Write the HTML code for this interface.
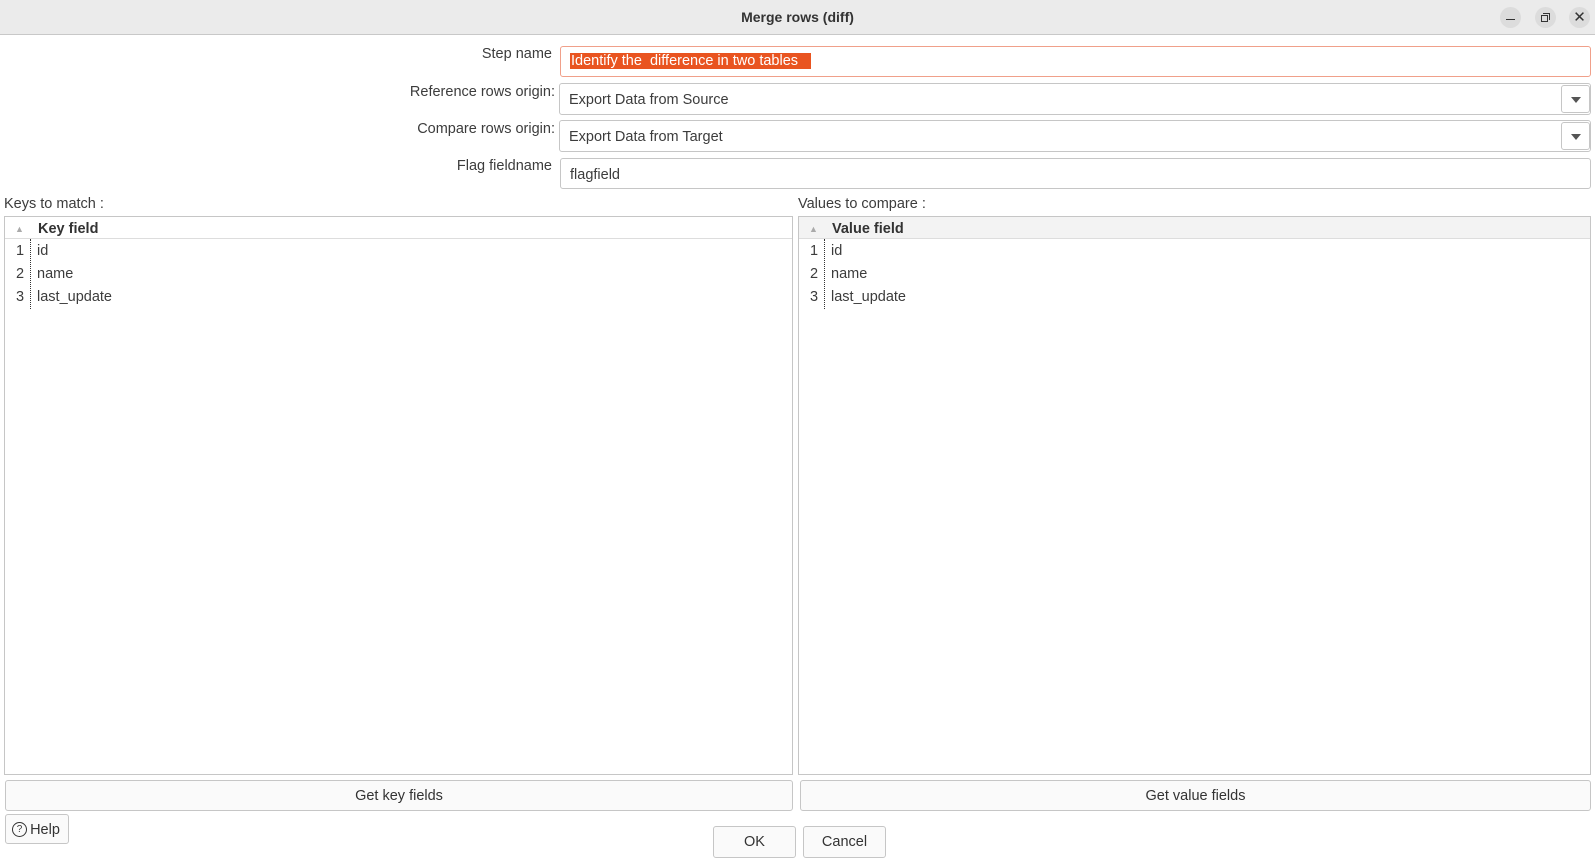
<!DOCTYPE html>
<html><head><meta charset="utf-8"><style>
*{box-sizing:border-box;margin:0;padding:0}
body{width:1595px;height:850px;overflow:hidden;background:#fff;font-family:"Liberation Sans","DejaVu Sans",sans-serif;font-size:14.5px;color:#3c3c3c;position:relative}
.a{position:absolute}
.title{left:0;top:0;width:1595px;height:35px;background:#ebebeb;border-bottom:1px solid #c8c8c8;text-align:center;line-height:35px;font-weight:bold;font-size:14px;color:#333}
.wb{width:21px;height:21px;border-radius:50%;background:#dcdcdc;top:7px}
.lbl{text-align:right;width:300px}
.inp{border:1px solid #c6c6c6;border-radius:3px;background:#fff;padding-left:9px;line-height:32px}
.dd{width:29px;height:28px;border:1px solid #c6c6c6;border-radius:3px;background:#fff}
.dd:after{content:"";position:absolute;left:9px;top:11px;border-left:5px solid transparent;border-right:5px solid transparent;border-top:6px solid #555}
.tbl{border:1px solid #c6c6c6;background:#fff}
.hdr{left:0;top:0;right:0;height:22px;border-bottom:1px solid #ddd;font-weight:bold;line-height:24px;color:#333}
.row{height:23px;line-height:25px;left:0;right:0}
.btn{border:1px solid #c6c6c6;border-radius:3px;background:#fafafa;text-align:center;line-height:31px;color:#333}
</style></head><body>
<div class="a title">Merge rows (diff)</div>
<div class="a wb" style="left:1500px"><div class="a" style="left:6px;top:12px;width:9px;height:1px;background:#333"></div></div>
<div class="a wb" style="left:1535px"><div class="a" style="left:6px;top:8px;width:7px;height:7px;border:1px solid #333"></div><div class="a" style="left:8px;top:6px;width:7px;height:7px;border-top:1px solid #333;border-right:1px solid #333"></div></div>
<div class="a wb" style="left:1569px;font-size:15px;line-height:21px;text-align:center;color:#333">✕</div>

<div class="a lbl" style="left:252px;top:46px">Step name</div>
<div class="a lbl" style="left:255px;top:84px">Reference rows origin:</div>
<div class="a lbl" style="left:255px;top:121px">Compare rows origin:</div>
<div class="a lbl" style="left:252px;top:158px">Flag fieldname</div>

<div class="a inp" style="left:560px;top:46px;width:1031px;height:31px;border-color:#f0a08a"></div>
<div class="a" style="left:570px;top:53px;width:241px;height:16px;background:#e95420;color:#fff;line-height:17px;padding-left:1px;white-space:nowrap;overflow:hidden">Identify the&nbsp; difference in two tables</div>
<div class="a inp" style="left:559px;top:83px;width:1032px;height:32px">Export Data from Source</div>
<div class="a dd" style="left:1561px;top:85px"></div>
<div class="a inp" style="left:559px;top:120px;width:1032px;height:32px">Export Data from Target</div>
<div class="a dd" style="left:1561px;top:122px"></div>
<div class="a inp" style="left:560px;top:158px;width:1031px;height:31px">flagfield</div>

<div class="a" style="left:4px;top:196px">Keys to match :</div>
<div class="a" style="left:798px;top:196px">Values to compare :</div>

<div class="a tbl" style="left:4px;top:216px;width:789px;height:559px">
 <div class="a hdr"><span class="a" style="left:10px;top:0;font-size:9px;color:#aaa">▲</span><span class="a" style="left:33px">Key field</span></div>
 <div class="a" style="left:25px;top:22px;height:70px;border-left:1px dotted #333"></div>
 <div class="a row" style="top:22px"><span class="a" style="left:11px">1</span><span class="a" style="left:32px">id</span></div>
 <div class="a row" style="top:45px"><span class="a" style="left:11px">2</span><span class="a" style="left:32px">name</span></div>
 <div class="a row" style="top:68px"><span class="a" style="left:11px">3</span><span class="a" style="left:32px">last_update</span></div>
</div>
<div class="a tbl" style="left:798px;top:216px;width:793px;height:559px">
 <div class="a hdr" style="background:#f3f3f3"><span class="a" style="left:10px;top:0;font-size:9px;color:#aaa">▲</span><span class="a" style="left:33px">Value field</span></div>
 <div class="a" style="left:25px;top:22px;height:70px;border-left:1px dotted #333"></div>
 <div class="a row" style="top:22px"><span class="a" style="left:11px">1</span><span class="a" style="left:32px">id</span></div>
 <div class="a row" style="top:45px"><span class="a" style="left:11px">2</span><span class="a" style="left:32px">name</span></div>
 <div class="a row" style="top:68px"><span class="a" style="left:11px">3</span><span class="a" style="left:32px">last_update</span></div>
</div>

<div class="a btn" style="left:5px;top:780px;width:788px;height:31px">Get key fields</div>
<div class="a btn" style="left:800px;top:780px;width:791px;height:31px">Get value fields</div>
<div class="a btn" style="left:5px;top:814px;width:64px;height:30px;padding-left:16px">Help</div>
<div class="a" style="left:12px;top:822px;width:15px;height:15px;border:1.3px solid #333;border-radius:50%;font-size:10px;line-height:13px;text-align:center">?</div>
<div class="a btn" style="left:713px;top:826px;width:83px;height:32px">OK</div>
<div class="a btn" style="left:803px;top:826px;width:83px;height:32px">Cancel</div>
</body></html>
